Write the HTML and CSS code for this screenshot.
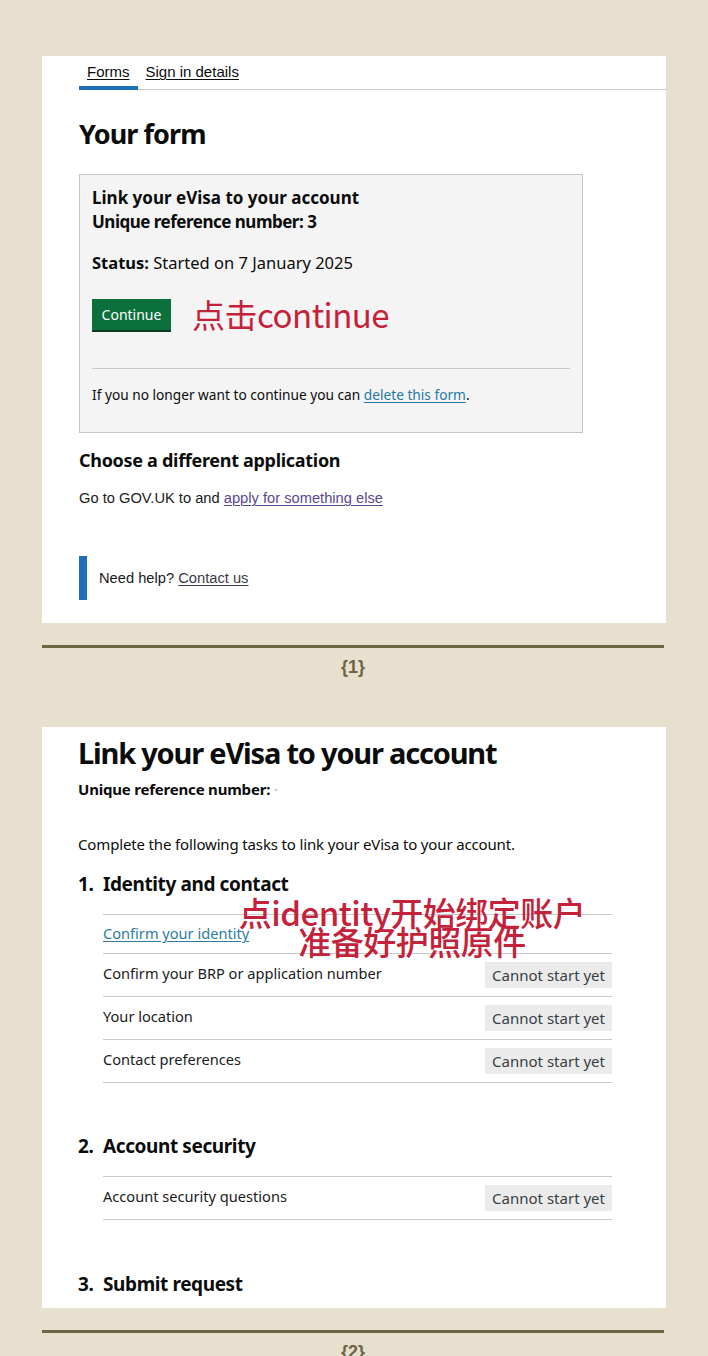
FILE: index.html
```html
<!DOCTYPE html>
<html lang="en">

<head>
	<meta charset="UTF-8">
	<meta name="viewport" content="width=device-width, initial-scale=1.0">
	<title>Link your eVisa</title>
	<link rel="stylesheet" href="styles.css">
</head>

<body>
	<div class="page">

		<!-- shot 1 -->
		<div class="card card-forms">
			<nav class="tabs">
				<a class="tab active" href="#">Forms</a>
				<a class="tab" href="#">Sign in details</a>
			</nav>

			<h1 class="title">Your form</h1>

			<div class="form-box">
				<h2 class="box-title">Link your eVisa to your account</h2>
				<p class="box-ref">Unique reference number: 3</p>
				<p class="box-status"><b>Status:</b> Started on 7 January 2025</p>
				<div class="action-row">
					<button class="btn-green">Continue</button>
					<span class="note note-inline">点击continue</span>
				</div>
				<hr class="box-rule">
				<p class="box-small">If you no longer want to continue you can <a href="#" class="link-blue">delete this form</a>.</p>
			</div>

			<h2 class="sub-title">Choose a different application</h2>
			<p class="plain">Go to GOV.UK to and <a href="#" class="link-purple">apply for something else</a></p>

			<div class="help">
				Need help? <a href="#" class="link-grey">Contact us</a>
			</div>
		</div>

		<div class="divider">
			<div class="divider-line"></div>
			<div class="divider-num">{1}</div>
		</div>

		<!-- shot 2 -->
		<div class="card card-tasks">
			<h1 class="big-title">Link your eVisa to your account</h1>
			<p class="ref">Unique reference number: <span class="blur">·</span></p>
			<p class="intro">Complete the following tasks to link your eVisa to your account.</p>

			<div class="section">
				<h2 class="section-title"><span class="num">1.</span>Identity and contact</h2>
				<ul class="tasks">
					<li class="task first"><a href="#" class="link-teal">Confirm your identity</a></li>
					<li class="task"><span>Confirm your BRP or application number</span><span class="tag">Cannot start yet</span></li>
					<li class="task"><span>Your location</span><span class="tag">Cannot start yet</span></li>
					<li class="task"><span>Contact preferences</span><span class="tag">Cannot start yet</span></li>
				</ul>
				<div class="note note-over">点identity开始绑定账户<br>准备好护照原件</div>
			</div>

			<div class="section">
				<h2 class="section-title"><span class="num">2.</span>Account security</h2>
				<ul class="tasks">
					<li class="task"><span>Account security questions</span><span class="tag">Cannot start yet</span></li>
				</ul>
			</div>

			<div class="section last">
				<h2 class="section-title"><span class="num">3.</span>Submit request</h2>
			</div>
		</div>

		<div class="divider">
			<div class="divider-line"></div>
			<div class="divider-num">{2}</div>
		</div>

	</div>
</body>

</html>
```

FILE: styles.css
```css
* {
	margin: 0;
	padding: 0;
	box-sizing: border-box;
}

body {
	background-color: #e8e0cf;
	font-family: "Noto Sans", "Noto Sans CJK SC", sans-serif;
	color: #0b0c0c;
	height: 1356px;
	overflow: hidden;
}

.page {
	padding-top: 56px;
}

.card {
	width: 624px;
	margin-left: 42px;
	background-color: #fff;
	padding: 0 36px 0 37px;
}

a {
	text-decoration: underline;
	text-underline-offset: 2px;
	text-decoration-thickness: 1px;
}

/* ---- shot 1 ---- */

.card-forms {
	height: 567px;
}

.tabs {
	display: flex;
	margin-right: -36px;
	border-bottom: 1px solid #c8cdd0;
	font-family: "Liberation Sans", Arial, sans-serif;
	font-size: 15px;
	padding-top: 6px;
}

.tab {
	color: #0b0c0c;
	padding: 0 8px 4px;
	line-height: 20px;
	border-bottom: 4px solid transparent;
	margin-bottom: -1px;
}

.tab.active {
	border-bottom-color: #1d70b8;
}

.title {
	font-size: 27px;
	font-weight: 700;
	line-height: 34px;
	margin-top: 27px;
	letter-spacing: -0.9px;
}

.form-box {
	width: 504px;
	margin-top: 23px;
	background-color: #f4f4f4;
	border: 1px solid #c3c6c8;
	padding: 11px 12px 27px 12px;
}

.box-title,
.box-ref {
	font-size: 17px;
	font-weight: 700;
	line-height: 24px;
}

.box-ref {
	letter-spacing: -0.5px;
}

.box-status {
	font-size: 16.5px;
	line-height: 24px;
	margin-top: 17px;
}

.action-row {
	display: flex;
	align-items: center;
	margin-top: 22px;
}

.btn-green {
	width: 79px;
	height: 31px;
	border: none;
	background-color: #0b703c;
	box-shadow: 0 2px 0 #0a3b22;
	color: #fff;
	font-family: "Noto Sans", sans-serif;
	font-size: 14px;
}

.note {
	font-family: "Noto Sans CJK SC", "Noto Sans", sans-serif;
	color: #c4223a;
	font-weight: 500;
}

.note-inline {
	font-size: 33px;
	line-height: 34px;
	margin-left: 21px;
	font-weight: 400;
	letter-spacing: -0.5px;
}

.box-rule {
	border: none;
	border-top: 1px solid #c8cacc;
	margin-top: 37px;
}

.box-small {
	font-size: 13.7px;
	line-height: 20px;
	margin-top: 16px;
}

.link-blue {
	color: #2479a8;
}

.sub-title {
	font-size: 18px;
	font-weight: 700;
	line-height: 24px;
	margin-top: 15px;
	letter-spacing: -0.3px;
}

.plain {
	font-family: "Liberation Sans", Arial, sans-serif;
	font-size: 14.7px;
	line-height: 20px;
	margin-top: 16px;
	color: #1b1b1b;
}

.link-purple {
	color: #5b4891;
}

.help {
	margin-top: 48px;
	border-left: 8px solid #1d70b8;
	padding: 12px 0 12px 12px;
	font-family: "Liberation Sans", Arial, sans-serif;
	font-size: 14.7px;
	line-height: 20px;
	color: #1b1b1b;
}

.link-grey {
	color: #3a3a4a;
}

/* ---- separators ---- */

.divider {
	height: 104px;
	padding-top: 22px;
}

.divider-line {
	width: 622px;
	margin-left: 42px;
	height: 3px;
	background-color: #6e6544;
}

.divider-num {
	text-align: center;
	margin-left: -2px;
	margin-top: 9px;
	font-family: "Liberation Sans Narrow", "Liberation Sans", sans-serif;
	font-weight: 700;
	font-size: 18px;
	color: #6e6544;
}

/* ---- shot 2 ---- */

.card-tasks {
	height: 581px;
	padding-left: 36px;
	padding-top: 8px;
}

.big-title {
	font-size: 29px;
	font-weight: 700;
	line-height: 36px;
	letter-spacing: -1.2px;
}

.ref {
	font-size: 15px;
	font-weight: 700;
	line-height: 22px;
	margin-top: 7px;
	letter-spacing: -0.2px;
}

.blur {
	color: #ccc;
}

.intro {
	font-size: 15px;
	line-height: 22px;
	margin-top: 33px;
	letter-spacing: -0.15px;
}

.section {
	position: relative;
	margin-top: 16px;
}

.section + .section {
	margin-top: 50px;
}

.section.last {
	margin-top: 51px;
}

.section-title {
	font-size: 19px;
	font-weight: 700;
	line-height: 26px;
	display: flex;
	letter-spacing: -0.4px;
}

.num {
	width: 25px;
}

.tasks {
	list-style: none;
	width: 509px;
	margin-left: 25px;
	margin-top: 17px;
	border-top: 1px solid #c8cacc;
}

.task {
	display: flex;
	justify-content: space-between;
	align-items: center;
	height: 43px;
	border-bottom: 1px solid #c8cacc;
	font-size: 14.6px;
	color: #1b1b1b;
}

.task > span:first-child {
	align-self: flex-start;
	padding-top: 9px;
}

.task.first {
	height: 39px;
	align-items: flex-start;
	padding-top: 8px;
}

.link-teal {
	color: #2d7ca0;
}

.tag {
	background-color: #ebebeb;
	color: #383f43;
	padding: 0 7px;
	line-height: 26px;
	font-size: 15px;
}

.note-over {
	position: absolute;
	left: 134px;
	top: 27px;
	width: 400px;
	text-align: center;
	font-size: 33px;
	line-height: 29px;
	letter-spacing: -0.5px;
}
```
